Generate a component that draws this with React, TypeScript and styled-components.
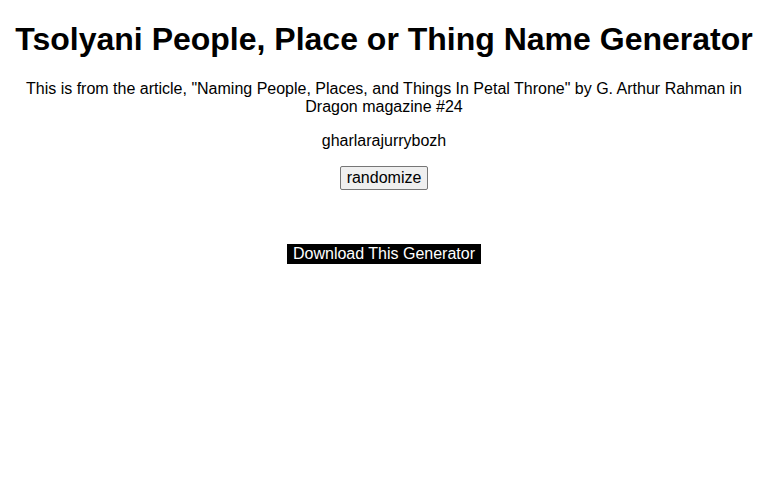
import styled, { createGlobalStyle } from 'styled-components';

const GlobalStyle = createGlobalStyle`
  body {
    margin: 0 8px 8px;
    background: #ffffff;
    color: #000000;
    font-family: "Liberation Sans", Arial, sans-serif;
    font-size: 16px;
  }
`;

const Page = styled.main`
  display: flow-root;
  text-align: center;
`;

const Title = styled.h1`
  margin: 21.44px 0;
  font-size: 32px;
  font-weight: 700;
`;

const Note = styled.p`
  margin: 16px 0;
  line-height: 18px;
`;

const Randomize = styled.button`
  font-family: "Liberation Sans", Arial, sans-serif;
  font-size: 16px;
  color: #000000;
  padding: 2px 6px;
  border: 1px solid #767676;
  border-radius: 2px;
  background: #efefef;
  line-height: 18px;
`;

const DownloadRow = styled.div`
  margin-top: 54px;
`;

const DownloadLink = styled.a`
  display: inline-block;
  padding: 1px 6px;
  background: #000000;
  color: #ffffff;
  text-decoration: none;
  line-height: 18px;
`;

export default function App() {
  return (
    <Page>
      <GlobalStyle />
      <Title>Tsolyani People, Place or Thing Name Generator</Title>
      <Note>
        This is from the article, "Naming People, Places, and Things In Petal Throne" by G. Arthur Rahman in
        Dragon magazine #24
      </Note>
      <Note>gharlarajurrybozh</Note>
      <Note>
        <Randomize type="button">randomize</Randomize>
      </Note>
      <DownloadRow>
        <DownloadLink href="#">Download This Generator</DownloadLink>
      </DownloadRow>
    </Page>
  );
}
